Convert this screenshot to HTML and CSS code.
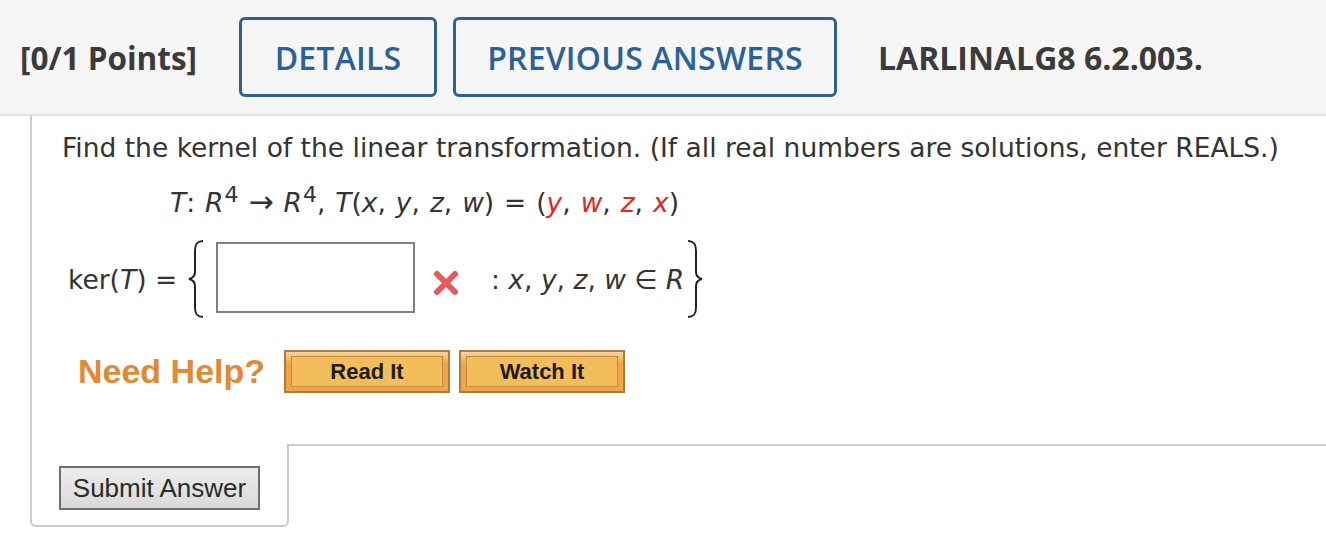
FILE: index.html
```html
<!DOCTYPE html>
<html>
<head>
<meta charset="utf-8">
<link rel="stylesheet" href="styles.css">
</head>
<body>
<div class="header">
  <div class="points">[0/1 Points]</div>
  <div class="hbtn details">DETAILS</div>
  <div class="hbtn prev">PREVIOUS ANSWERS</div>
  <div class="qid">LARLINALG8 6.2.003.</div>
</div>
<div class="panel">
  <div class="content">
    <p class="prompt">Find the kernel of the linear transformation. (If all real numbers are solutions, enter REALS.)</p>
    <p class="math"><i>T</i>: <i>R</i><sup>4</sup> <span class="arrow">→</span> <i>R</i><sup>4</sup>, <i>T</i>(<i>x</i>, <i>y</i>, <i>z</i>, <i>w</i>) = (<i class="red">y</i>, <i class="red">w</i>, <i class="red">z</i>, <i class="red">x</i>)</p>
    <div class="kerrow">
      <span class="ker">ker(<i>T</i>) =</span>
      <svg class="brace" width="18" height="80" viewBox="0 0 18 80"><path d="M16 2 C10 2 8 5 8 12 L8 33 C8 37 6 39 2 40 C6 41 8 43 8 47 L8 68 C8 75 10 78 16 78" fill="none" stroke="#222" stroke-width="2"/></svg>
      <div class="answer"></div>
      <svg class="xmark" width="28" height="28" viewBox="0 0 28 28"><path d="M5 5 L23 23 M23 5 L5 23" stroke="#e55a5c" stroke-width="6" stroke-linecap="round"/></svg>
      <span class="cond">: <i>x</i>, <i>y</i>, <i>z</i>, <i>w</i> ∈ <i>R</i></span>
      <svg class="brace" width="18" height="80" viewBox="0 0 18 80"><path d="M2 2 C8 2 10 5 10 12 L10 33 C10 37 12 39 16 40 C12 41 10 43 10 47 L10 68 C10 75 8 78 2 78" fill="none" stroke="#222" stroke-width="2"/></svg>
    </div>
    <div class="helprow">
      <span class="needhelp">Need Help?</span>
      <div class="obtn"><span>Read It</span></div>
      <div class="obtn"><span>Watch It</span></div>
    </div>
  </div>
  <div class="footer">
    <div class="tab"><button class="submit">Submit Answer</button></div>
    <div class="filler"></div>
  </div>
</div>
</body>
</html>
```
FILE: styles.css
```css
html, body { margin: 0; padding: 0; background: #fff; }
body { width: 1326px; height: 544px; overflow: hidden; }

.header {
  height: 114px;
  background: #f6f6f6;
  border-bottom: 2px solid #e0e0e0;
  display: flex;
  align-items: center;
  padding-left: 20px;
  font-family: "Open Sans", sans-serif;
}
.points {
  font-size: 31.5px;
  font-weight: 700;
  color: #3b3b3b;
  width: 219px;
}
.hbtn {
  box-sizing: border-box;
  height: 80px;
  border: 3px solid #2b6198;
  border-radius: 6px;
  color: #2b6198;
  font-size: 32px;
  font-weight: 600;
  letter-spacing: 0.2px;
  font-stretch: 96%;
  display: flex;
  align-items: center;
  justify-content: center;
}
.details { width: 198px; margin-right: 16px; }
.prev { width: 384px; margin-right: 41px; }
.qid {
  font-size: 32px;
  font-weight: 700;
  color: #3b3b3b;
}

.panel { margin-left: 30px; }
.content {
  height: 328px;
  box-sizing: border-box;
  border-left: 2px solid #cccccc;
  padding: 16px 0 0 30px;
  font-family: "DejaVu Sans", sans-serif;
  color: #333;
}
.prompt {
  margin: 0;
  font-size: 26.5px;
  line-height: 32px;
}
.math {
  margin: 23px 0 0 108px;
  font-size: 26.5px;
  line-height: 32px;
  word-spacing: 1.5px;
}
.math sup { font-size: 22px; vertical-align: 10px; line-height: 0; margin-left: 1px; }
.red { color: #e8231c; }
.arrow { font-style: normal; font-size: 30px; line-height: 0; }

.kerrow {
  display: flex;
  align-items: center;
  margin-top: 18px;
  height: 84px;
}
.ker { font-size: 26.5px; margin-left: 6px; width: 119px; }
.brace { display: block; }
.answer {
  box-sizing: border-box;
  width: 199px;
  height: 71px;
  border: 2px solid #808080;
  margin: 0 0 4px 11px;
}
.xmark { margin: 8px 0 0 17px; }
.cond { font-size: 26.5px; margin-left: 31px; margin-right: 2px; }

.helprow {
  display: flex;
  align-items: center;
  margin-top: 29px;
  margin-left: 16px;
}
.needhelp {
  font-family: "Liberation Sans", Arial, sans-serif;
  font-weight: 700;
  font-size: 34px;
  color: #e38a31;
  width: 206px;
}
.obtn {
  box-sizing: border-box;
  width: 166px;
  height: 43px;
  border: 2px solid #b27b3a;
  background: linear-gradient(#f8d79a, #eea545 30%, #eea545);
  padding: 4px 5px;
  margin-right: 9px;
}
.obtn span {
  display: flex;
  align-items: center;
  justify-content: center;
  height: 100%;
  box-sizing: border-box;
  border: 1px solid #c38b42;
  background: #f3be59;
  font-family: "Liberation Sans", Arial, sans-serif;
  font-weight: 700;
  font-size: 22px;
  color: #1e1a10;
}

.footer { display: flex; height: 83px; }
.tab {
  width: 259px;
  box-sizing: border-box;
  border-left: 2px solid #cccccc;
  border-right: 2px solid #cccccc;
  border-bottom: 2px solid #cccccc;
  border-radius: 0 0 6px 6px;
  padding: 22px 0 0 27px;
}
.filler { flex: 1; border-top: 2px solid #cccccc; }
.submit {
  box-sizing: border-box;
  width: 201px;
  height: 44px;
  border: 2px solid #6e6e6e;
  background: linear-gradient(#ececec, #d9d9d9);
  font-family: "Liberation Sans", Arial, sans-serif;
  font-size: 26px;
  color: #2a2a2a;
  padding: 0;
  border-radius: 0;
}
```
